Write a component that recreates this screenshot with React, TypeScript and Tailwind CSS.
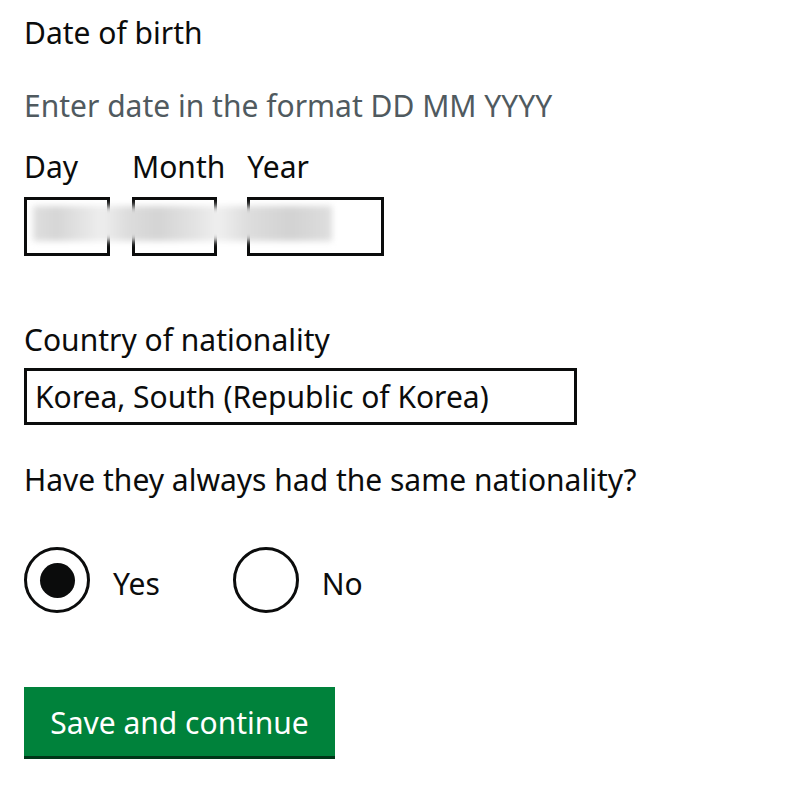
import React from "react";

export default function App() {
  return (
    <div
      className="w-[800px] min-h-[803px] bg-white pl-[24px] pt-[13px] text-[#0b0c0c] text-[30px] leading-[40px]"
      style={{ fontFamily: '"Noto Sans", "Liberation Sans", Arial, sans-serif' }}
    >
      <div>Date of birth</div>
      <div className="mt-[33px] text-[#505a5f]">Enter date in the format DD MM YYYY</div>
      <div className="relative mt-[21px] flex gap-[22px]">
        <div className="flex flex-col items-start">
          <label>Day</label>
          <div className="mt-[10px] w-[86px] h-[59px] border-[3px] border-[#0b0c0c]" />
        </div>
        <div className="flex flex-col items-start">
          <label>Month</label>
          <div className="mt-[10px] w-[85px] h-[59px] border-[3px] border-[#0b0c0c]" />
        </div>
        <div className="flex flex-col items-start">
          <label>Year</label>
          <div className="mt-[10px] w-[137px] h-[59px] border-[3px] border-[#0b0c0c]" />
        </div>
        <div className="absolute left-[9px] top-[59px] w-[299px] h-[35px] blur-[3px] bg-[linear-gradient(90deg,#dedede_0%,#d6d6d6_8%,#e6e6e6_18%,#eeeeee_23%,#dcdcdc_32%,#d4d4d4_42%,#e4e4e4_55%,#efefef_62%,#dddddd_72%,#d2d2d2_86%,#dedede_100%)]" />
      </div>

      <div className="mt-[64px]">Country of nationality</div>
      <div className="mt-[8px] w-[553px] h-[57px] border-[3px] border-[#0b0c0c] flex items-center pl-[8px]">
        Korea, South (Republic of Korea)
      </div>

      <div className="mt-[35px]">Have they always had the same nationality?</div>

      <div className="mt-[47px] flex items-center">
        <div className="flex items-center">
          <div className="w-[66px] h-[66px] rounded-full border-[3px] border-[#0b0c0c] flex items-center justify-center">
            <div className="w-[35px] h-[35px] rounded-full bg-[#0b0c0c]" />
          </div>
          <span className="ml-[23px] pt-[8px]">Yes</span>
        </div>
        <div className="flex items-center ml-[73px]">
          <div className="w-[66px] h-[66px] rounded-full border-[3px] border-[#0b0c0c]" />
          <span className="ml-[23px] pt-[8px]">No</span>
        </div>
      </div>

      <button className="mt-[74px] w-[311px] h-[69px] bg-[#00823b] text-white flex items-center justify-center shadow-[0_3px_0_#003618] pt-[2px]">
        Save and continue
      </button>
    </div>
  );
}
